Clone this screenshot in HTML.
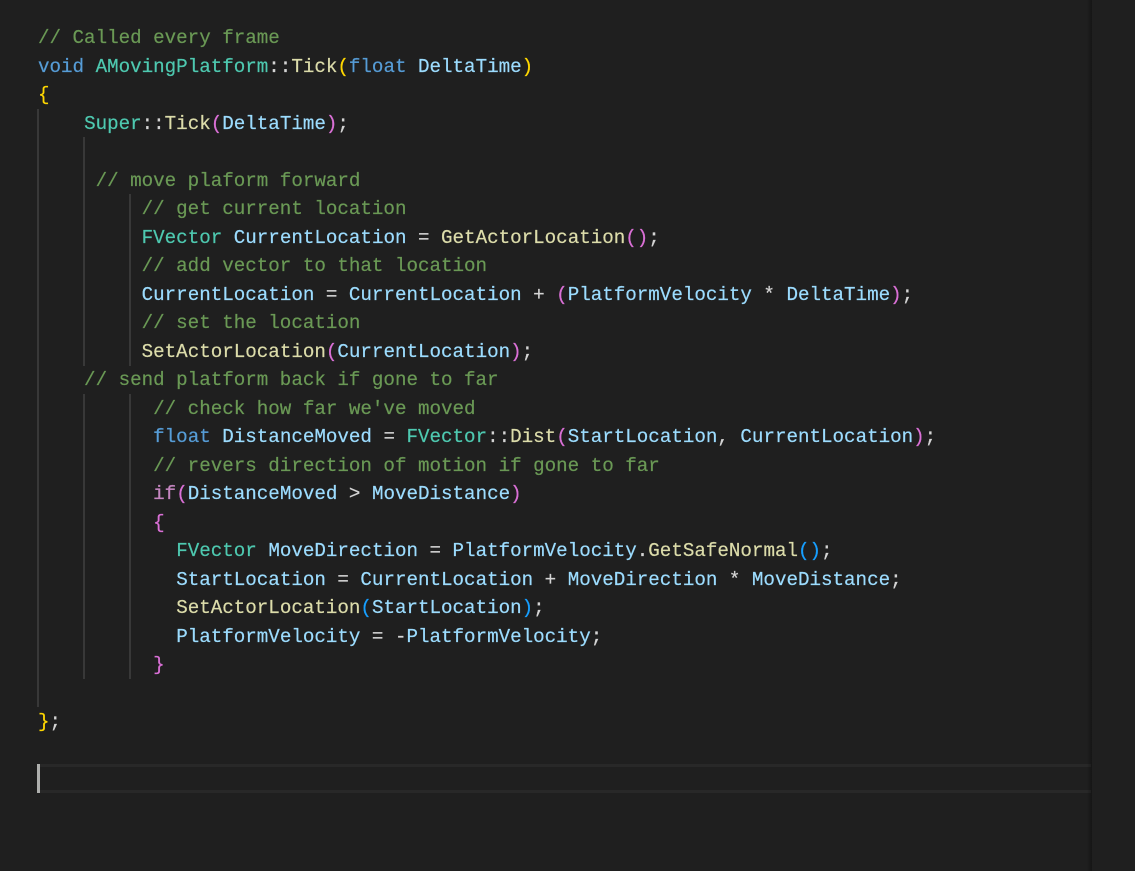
<!DOCTYPE html>
<html><head><meta charset="utf-8"><style>
html,body{margin:0;padding:0;background:#1f1f1f;width:1135px;height:871px;overflow:hidden}
#w{position:absolute;left:0;top:1px;width:1135px;height:870px}
.l{position:absolute;left:38px;height:28.5px;font:19.2px/28.5px "Liberation Mono",monospace;white-space:pre;color:#d4d4d4;-webkit-text-stroke:.2px currentColor}
.c{color:#6a9955}.k{color:#569cd6}.t{color:#4ec9b0}.f{color:#dcdcaa}.v{color:#9cdcfe}.y{color:#ffd700}.p{color:#da70d6}.b{color:#179fff}.m{color:#c586c0}
.g{position:absolute;width:2px;background:#383838}
.r{position:absolute}
</style></head><body>
<div class="r" style="left:38px;top:764px;width:1053px;height:29px;box-sizing:border-box;border-top:3px solid #282828;border-bottom:3px solid #282828"></div>
<div class="r" style="left:37px;top:764px;width:3px;height:29px;background:#aeafad"></div>
<div class="r" style="left:1087px;top:0;width:5px;height:871px;background:linear-gradient(to right,rgba(0,0,0,0),rgba(0,0,0,.3))"></div>
<div class="g" style="left:37px;top:109px;height:598px"></div>
<div class="g" style="left:83px;top:137px;height:229px"></div>
<div class="g" style="left:83px;top:394px;height:285px"></div>
<div class="g" style="left:129px;top:194px;height:172px"></div>
<div class="g" style="left:129px;top:394px;height:285px"></div>
<div id="w">
<div class="l c" style="top:23px">// Called every frame</div>
<div class="l" style="top:51.5px"><span class="k">void</span> <span class="t">AMovingPlatform</span>::<span class="f">Tick</span><span class="y">(</span><span class="k">float</span> <span class="v">DeltaTime</span><span class="y">)</span></div>
<div class="l y" style="top:80px">{</div>
<div class="l" style="top:108.5px">    <span class="t">Super</span>::<span class="f">Tick</span><span class="p">(</span><span class="v">DeltaTime</span><span class="p">)</span>;</div>
<div class="l c" style="top:165.5px">     // move plaform forward</div>
<div class="l c" style="top:194px">         // get current location</div>
<div class="l" style="top:222.5px">         <span class="t">FVector</span> <span class="v">CurrentLocation</span> = <span class="f">GetActorLocation</span><span class="p">()</span>;</div>
<div class="l c" style="top:251px">         // add vector to that location</div>
<div class="l" style="top:279.5px">         <span class="v">CurrentLocation</span> = <span class="v">CurrentLocation</span> + <span class="p">(</span><span class="v">PlatformVelocity</span> * <span class="v">DeltaTime</span><span class="p">)</span>;</div>
<div class="l c" style="top:308px">         // set the location</div>
<div class="l" style="top:336.5px">         <span class="f">SetActorLocation</span><span class="p">(</span><span class="v">CurrentLocation</span><span class="p">)</span>;</div>
<div class="l c" style="top:365px">    // send platform back if gone to far</div>
<div class="l c" style="top:393.5px">          // check how far we've moved</div>
<div class="l" style="top:422px">          <span class="k">float</span> <span class="v">DistanceMoved</span> = <span class="t">FVector</span>::<span class="f">Dist</span><span class="p">(</span><span class="v">StartLocation</span>, <span class="v">CurrentLocation</span><span class="p">)</span>;</div>
<div class="l c" style="top:450.5px">          // revers direction of motion if gone to far</div>
<div class="l" style="top:479px">          <span class="m">if</span><span class="p">(</span><span class="v">DistanceMoved</span> &gt; <span class="v">MoveDistance</span><span class="p">)</span></div>
<div class="l p" style="top:507.5px">          {</div>
<div class="l" style="top:536px">            <span class="t">FVector</span> <span class="v">MoveDirection</span> = <span class="v">PlatformVelocity</span>.<span class="f">GetSafeNormal</span><span class="b">()</span>;</div>
<div class="l" style="top:564.5px">            <span class="v">StartLocation</span> = <span class="v">CurrentLocation</span> + <span class="v">MoveDirection</span> * <span class="v">MoveDistance</span>;</div>
<div class="l" style="top:593px">            <span class="f">SetActorLocation</span><span class="b">(</span><span class="v">StartLocation</span><span class="b">)</span>;</div>
<div class="l" style="top:621.5px">            <span class="v">PlatformVelocity</span> = -<span class="v">PlatformVelocity</span>;</div>
<div class="l p" style="top:650px">          }</div>
<div class="l" style="top:707px"><span class="y">}</span>;</div>
</div>
</body></html>
